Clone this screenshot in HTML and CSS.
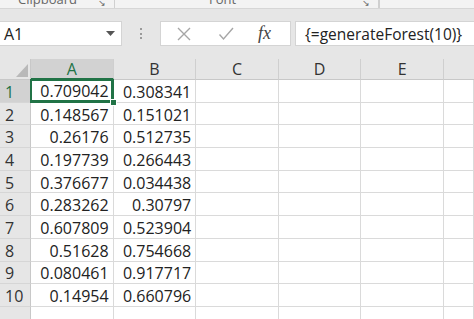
FILE: index.html
```html
<!DOCTYPE html>
<html lang="en">
<head>
    <meta charset="UTF-8">
    <title>Book1 - Excel</title>
    <link rel="stylesheet" href="styles.css">
</head>
<body>
    <div class="ribbon">
        <div class="group group-clip">
            <span class="group-label">Clipboard</span>
            <span class="launcher">&#8600;</span>
        </div>
        <div class="group group-font">
            <span class="group-label">Font</span>
            <span class="launcher">&#8600;</span>
        </div>
        <div class="group"></div>
    </div>

    <div class="formula-bar">
        <div class="name-box">
            <span>A1</span>
            <svg class="caret" width="9" height="5" viewBox="0 0 9 5"><path d="M0 0h9L4.5 5z" fill="#555"/></svg>
        </div>
        <div class="grip">
            <i></i><i></i><i></i>
        </div>
        <div class="fx-buttons">
            <svg width="16" height="16" viewBox="0 0 16 16"><path d="M2 2l12 12M14 2L2 14" stroke="#a6a6a6" stroke-width="1.4" fill="none"/></svg>
            <svg width="16" height="16" viewBox="0 0 16 16"><path d="M1.5 8.5l4 4.5L15 2" stroke="#a6a6a6" stroke-width="1.4" fill="none"/></svg>
            <span class="fx">fx</span>
        </div>
        <div class="formula">{=generateForest(10)}</div>
    </div>

    <div class="sheet">
        <div class="corner"><span class="tri"></span></div>
        <div class="col-head active">A</div>
        <div class="col-head">B</div>
        <div class="col-head">C</div>
        <div class="col-head">D</div>
        <div class="col-head">E</div>
        <div class="col-head last"></div>

        <div class="row-head active">1</div>
        <div class="cell selected">0.709042<span class="handle"></span></div>
        <div class="cell">0.308341</div>
        <div class="cell"></div><div class="cell"></div><div class="cell"></div><div class="cell"></div>

        <div class="row-head">2</div>
        <div class="cell">0.148567</div><div class="cell">0.151021</div>
        <div class="cell"></div><div class="cell"></div><div class="cell"></div><div class="cell"></div>

        <div class="row-head">3</div>
        <div class="cell">0.26176</div><div class="cell">0.512735</div>
        <div class="cell"></div><div class="cell"></div><div class="cell"></div><div class="cell"></div>

        <div class="row-head">4</div>
        <div class="cell">0.197739</div><div class="cell">0.266443</div>
        <div class="cell"></div><div class="cell"></div><div class="cell"></div><div class="cell"></div>

        <div class="row-head">5</div>
        <div class="cell">0.376677</div><div class="cell">0.034438</div>
        <div class="cell"></div><div class="cell"></div><div class="cell"></div><div class="cell"></div>

        <div class="row-head">6</div>
        <div class="cell">0.283262</div><div class="cell">0.30797</div>
        <div class="cell"></div><div class="cell"></div><div class="cell"></div><div class="cell"></div>

        <div class="row-head">7</div>
        <div class="cell">0.607809</div><div class="cell">0.523904</div>
        <div class="cell"></div><div class="cell"></div><div class="cell"></div><div class="cell"></div>

        <div class="row-head">8</div>
        <div class="cell">0.51628</div><div class="cell">0.754668</div>
        <div class="cell"></div><div class="cell"></div><div class="cell"></div><div class="cell"></div>

        <div class="row-head">9</div>
        <div class="cell">0.080461</div><div class="cell">0.917717</div>
        <div class="cell"></div><div class="cell"></div><div class="cell"></div><div class="cell"></div>

        <div class="row-head">10</div>
        <div class="cell">0.14954</div><div class="cell">0.660796</div>
        <div class="cell"></div><div class="cell"></div><div class="cell"></div><div class="cell"></div>

        <div class="row-head"></div>
        <div class="cell"></div><div class="cell"></div>
        <div class="cell"></div><div class="cell"></div><div class="cell"></div><div class="cell"></div>
    </div>
</body>
</html>
```

FILE: styles.css
```css
html, body {
    margin: 0;
    padding: 0;
    width: 474px;
    height: 319px;
    overflow: hidden;
    background: #e6e6e6;
    font-family: "Open Sans", "Liberation Sans", sans-serif;
}

/* ribbon group labels, cut off at the top */
.ribbon {
    display: flex;
    height: 8px;
    overflow: hidden;
    background: #f3f3f3;
    border-bottom: 1px solid #d6d6d6;
}

.group {
    display: flex;
    position: relative;
    height: 8px;
    border-right: 1px solid #d0d0d0;
}

.group-clip {
    width: 114px;
}

.group-font {
    width: 263px;
}

.group-label {
    font-size: 13px;
    color: #666;
    line-height: 13px;
    margin-top: -7px;
}

.group-clip .group-label {
    margin-left: 18px;
}

.group-font .group-label {
    margin-left: 94px;
}

.launcher {
    position: absolute;
    right: 8px;
    top: -4px;
    font-size: 9px;
    color: #666;
}

/* formula bar */
.formula-bar {
    display: flex;
    align-items: stretch;
    height: 25px;
    margin-top: 12px;
}

.name-box {
    width: 122px;
    box-sizing: border-box;
    background: #fff;
    border: 1px solid #d4d4d4;
    border-left: none;
    display: flex;
    align-items: center;
    justify-content: space-between;
    padding: 0 6px 0 4px;
    font-size: 16px;
    color: #222;
}

.grip {
    width: 38px;
    display: flex;
    flex-direction: column;
    align-items: center;
    justify-content: center;
    gap: 2.5px;
}

.grip i {
    display: block;
    width: 2px;
    height: 2px;
    background: #9a9a9a;
}

.fx-buttons {
    width: 131px;
    box-sizing: border-box;
    background: #fff;
    border: 1px solid #d4d4d4;
    display: flex;
    align-items: center;
    padding-left: 15px;
    gap: 26px;
}

.fx {
    font-family: "Liberation Serif", "DejaVu Serif", serif;
    font-style: italic;
    font-size: 18px;
    color: #444;
    margin-left: -2px;
}

.formula {
    flex: 1;
    margin-left: 4px;
    background: #fff;
    border: 1px solid #d4d4d4;
    border-right: none;
    display: flex;
    align-items: center;
    padding-left: 9px;
    font-size: 15.5px;
    color: #222;
}

/* grid */
.sheet {
    margin-top: 13px;
    display: grid;
    grid-template-columns: 31px repeat(5, 82.6px) 1fr;
    grid-template-rows: 21px repeat(11, 22.7px);
    background: #fff;
    font-size: 16px;
    color: #222;
}

.corner {
    background: #e6e6e6;
    border-right: 1px solid #c8c8c8;
    border-bottom: 1px solid #c8c8c8;
    position: relative;
}

.tri {
    position: absolute;
    right: 2px;
    bottom: 2px;
    width: 0;
    height: 0;
    border-left: 12px solid transparent;
    border-bottom: 13px solid #b9b9b9;
}

.col-head {
    background: #e6e6e6;
    border-right: 1px solid #cfcfcf;
    border-bottom: 1px solid #c8c8c8;
    display: flex;
    align-items: center;
    justify-content: center;
    color: #333;
    line-height: 1;
}

.col-head.last {
    border-right: none;
}

.col-head.active {
    background: #d2d2d2;
    color: #217346;
    border-bottom: 2px solid #217346;
}

.row-head {
    background: #e6e6e6;
    border-right: 1px solid #c8c8c8;
    border-bottom: 1px solid #d6d6d6;
    display: flex;
    align-items: center;
    padding-left: 5px;
    padding-top: 2px;
    color: #333;
    line-height: 1;
}

.row-head.active {
    background: #d2d2d2;
    color: #217346;
}

.cell {
    border-right: 1px solid #dadada;
    border-bottom: 1px solid #dadada;
    display: flex;
    align-items: center;
    justify-content: flex-end;
    padding-right: 4px;
    padding-top: 2px;
    line-height: 1;
    white-space: nowrap;
    position: relative;
}

.cell.selected {
    box-shadow: inset 0 0 0 2px #217346;
    margin: -1px 0 0 -1px;
    border-right: 1px solid #217346;
    border-bottom: 1px solid #217346;
}

.handle {
    position: absolute;
    right: -4px;
    bottom: -4px;
    width: 5px;
    height: 5px;
    background: #217346;
    border: 1px solid #fff;
    z-index: 2;
}
```
